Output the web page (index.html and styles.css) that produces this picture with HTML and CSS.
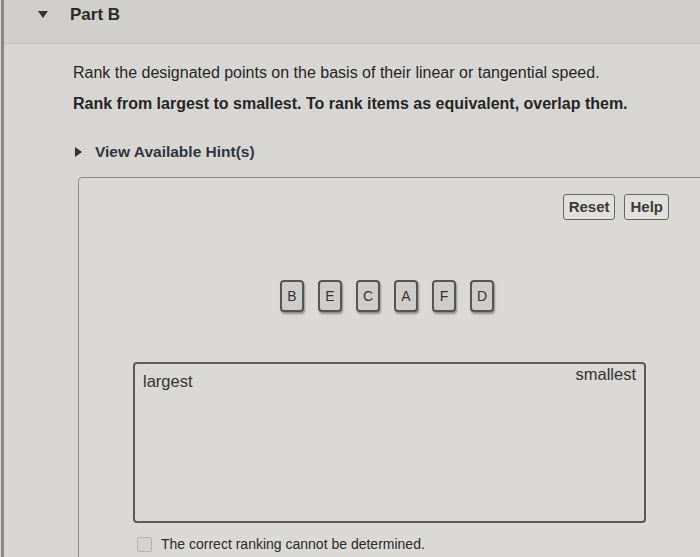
FILE: index.html
```html
<!DOCTYPE html>
<html>
<head>
<meta charset="utf-8">
<link rel="stylesheet" href="styles.css">
</head>
<body>
<div class="page">
  <div class="part-head">
    <span class="caret-down"></span>
    <span class="part-title">Part B</span>
  </div>
  <div class="content">
    <p class="q">Rank the designated points on the basis of their linear or tangential speed.</p>
    <p class="q bold">Rank from largest to smallest. To rank items as equivalent, overlap them.</p>
    <div class="hint"><span class="caret-right"></span><span>View Available Hint(s)</span></div>
    <div class="panel">
      <div class="tools">
        <span class="btn">Reset</span>
        <span class="btn">Help</span>
      </div>
      <div class="tiles">
        <span class="tile">B</span>
        <span class="tile">E</span>
        <span class="tile">C</span>
        <span class="tile">A</span>
        <span class="tile">F</span>
        <span class="tile">D</span>
      </div>
      <div class="rankbox">
        <span class="lbl">largest</span>
        <span class="lbl right">smallest</span>
      </div>
      <label class="check"><span class="box"></span><span>The correct ranking cannot be determined.</span></label>
    </div>
  </div>
</div>
</body>
</html>
```
FILE: styles.css
```css
html, body {
  margin: 0;
  padding: 0;
  background: #d8d6d2;
}
body {
  font-family: "Liberation Sans", Arial, sans-serif;
  color: #222;
  width: 700px;
  height: 557px;
  overflow: hidden;
}
.page {
  border-left: 3px solid #8a8884;
  margin-left: 1px;
  height: 557px;
}
.part-head {
  height: 44px;
  background: #d1cfcb;
  border-bottom: 1px solid #c2c0bc;
  display: flex;
  align-items: center;
  padding-left: 34px;
  box-sizing: border-box;
  padding-bottom: 14px;
}
.caret-down {
  width: 0;
  height: 0;
  border-left: 5px solid transparent;
  border-right: 5px solid transparent;
  border-top: 7px solid #333;
  margin-right: 22px;
}
.part-title {
  font-size: 17px;
  font-weight: bold;
  color: #2a2a2a;
}
.content {
  padding-left: 69px;
  padding-top: 20px;
}
.q {
  margin: 0 0 13px 0;
  font-size: 16px;
  line-height: 18px;
  color: #262626;
}
.q.bold {
  font-weight: bold;
}
.hint {
  display: flex;
  align-items: center;
  margin-top: 30px;
  font-size: 15.5px;
  font-weight: bold;
  color: #2f3540;
}
.caret-right {
  width: 0;
  height: 0;
  border-top: 5px solid transparent;
  border-bottom: 5px solid transparent;
  border-left: 7px solid #333;
  margin-left: 2px;
  margin-right: 13px;
}
.panel {
  margin-top: 16px;
  margin-left: 5px;
  width: 660px;
  height: 400px;
  border: 1px solid #8e8c88;
  border-radius: 4px;
  background: #dbd9d5;
}
.tools {
  display: flex;
  justify-content: flex-end;
  gap: 9px;
  padding-top: 16px;
  padding-right: 70px;
}
.btn {
  border: 1.5px solid #666;
  border-radius: 3px;
  padding: 3px 5px;
  font-size: 15px;
  font-weight: bold;
  color: #3a3a3a;
  background: #e2e0dc;
  line-height: 18px;
}
.tiles {
  display: flex;
  gap: 14px;
  margin-top: 60px;
  margin-left: 201px;
}
.tile {
  width: 20px;
  height: 28px;
  border: 2px solid #555;
  border-radius: 4px;
  background: #cfcdca;
  box-shadow: 1px 2px 2px rgba(0,0,0,0.35);
  display: flex;
  align-items: center;
  justify-content: center;
  font-size: 14px;
  color: #333;
}
.rankbox {
  margin-top: 50px;
  margin-left: 54px;
  width: 513px;
  height: 161px;
  border: 2px solid #5a5a5a;
  border-radius: 4px;
  background: #dad8d4;
  display: flex;
  justify-content: space-between;
  align-items: flex-start;
  box-sizing: border-box;
  padding: 5px 8px;
}
.lbl {
  font-size: 16.5px;
  color: #333;
  margin-top: 3px;
}
.lbl.right {
  margin-top: -4px;
}
.check {
  display: flex;
  align-items: center;
  gap: 9px;
  margin-top: 13px;
  margin-left: 58px;
  font-size: 14px;
  color: #2a2a2a;
}
.box {
  width: 13px;
  height: 13px;
  border: 1px solid #b5b3af;
  border-radius: 2px;
  background: #d5d3cf;
}
```
